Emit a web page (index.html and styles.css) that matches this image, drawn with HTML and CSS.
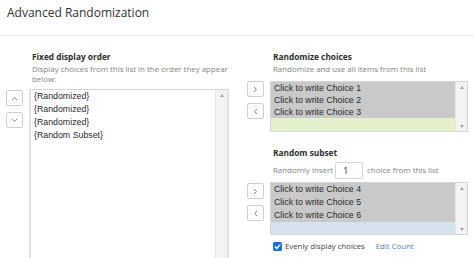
FILE: index.html
```html
<!DOCTYPE html>
<html>
<head>
<meta charset="utf-8">
<link rel="stylesheet" href="styles.css">
</head>
<body>
<div class="header"><h1 class="title">Advanced Randomization</h1></div>
<div class="main">
  <section class="section left">
    <div class="spacer"></div>
    <div class="labels">
      <div class="heading">Fixed display order</div>
      <div class="desc nowrap">Display choices from this list in the order they appear<br>below:</div>
    </div>
    <div class="btns btns-left">
      <button class="btn"><svg width="7" height="5" viewBox="0 0 7 5"><path d="M1 4 L3.5 1.5 L6 4" fill="none" stroke="#888" stroke-width="1"/></svg></button>
      <button class="btn"><svg width="7" height="5" viewBox="0 0 7 5"><path d="M1 1 L3.5 3.5 L6 1" fill="none" stroke="#888" stroke-width="1"/></svg></button>
    </div>
    <div class="list list-fixed">
      <div class="items">
        <div class="item">{Randomized}</div>
        <div class="item">{Randomized}</div>
        <div class="item">{Randomized}</div>
        <div class="item">{Random Subset}</div>
      </div>
      <div class="scroll"><span class="arr up"></span></div>
    </div>
  </section>

  <div class="right">
    <section class="section">
      <div class="spacer"></div>
      <div class="labels">
        <div class="heading">Randomize choices</div>
        <div class="desc">Randomize and use all items from this list</div>
      </div>
      <div class="btns btns-r1">
        <button class="btn"><svg width="5" height="7" viewBox="0 0 5 7"><path d="M1 1 L3.5 3.5 L1 6" fill="none" stroke="#888" stroke-width="1"/></svg></button>
        <button class="btn"><svg width="5" height="7" viewBox="0 0 5 7"><path d="M4 1 L1.5 3.5 L4 6" fill="none" stroke="#888" stroke-width="1"/></svg></button>
      </div>
      <div class="list list-choices">
        <div class="items">
          <div class="item sel">Click to write Choice 1</div>
          <div class="item sel">Click to write Choice 2</div>
          <div class="item sel">Click to write Choice 3</div>
          <div class="item drop green"></div>
        </div>
        <div class="scroll"><span class="arr up"></span><span class="arr down"></span></div>
      </div>
    </section>

    <section class="section subset">
      <div class="spacer"></div>
      <div class="labels">
        <div class="heading">Random subset</div>
        <div class="desc insert">Randomly insert <span class="num">1</span> choice from this list</div>
      </div>
      <div class="btns btns-r2">
        <button class="btn"><svg width="5" height="7" viewBox="0 0 5 7"><path d="M1 1 L3.5 3.5 L1 6" fill="none" stroke="#888" stroke-width="1"/></svg></button>
        <button class="btn"><svg width="5" height="7" viewBox="0 0 5 7"><path d="M4 1 L1.5 3.5 L4 6" fill="none" stroke="#888" stroke-width="1"/></svg></button>
      </div>
      <div class="list list-subset">
        <div class="items">
          <div class="item sel sub">Click to write Choice 4</div>
          <div class="item sel sub">Click to write Choice 5</div>
          <div class="item sel sub">Click to write Choice 6</div>
          <div class="item drop blue"></div>
        </div>
        <div class="scroll"><span class="arr up"></span><span class="arr down"></span></div>
      </div>
      <div class="spacer"></div>
      <div class="options">
        <span class="check"><svg width="9" height="9" viewBox="0 0 9 9"><rect x="0" y="0" width="9" height="9" rx="1.5" fill="#1a73e8"/><path d="M2 4.6 L3.8 6.4 L7.2 2.6" fill="none" stroke="#fff" stroke-width="1.4"/></svg></span>
        <span class="opt-label">Evenly display choices</span>
        <span class="link">Edit Count</span>
      </div>
    </section>
  </div>
</div>
</body>
</html>
```
FILE: styles.css
```css
* { box-sizing: border-box; }
html, body { margin: 0; padding: 0; background: #fff; }
body {
  width: 474px;
  height: 258px;
  overflow: hidden;
  font-family: "Open Sans", sans-serif;
  color: #333;
}
.header {
  height: 36px;
  border-bottom: 1px solid #eeeeee;
  padding: 3px 0 0 7px;
}
.title {
  margin: 0;
  font-size: 12px;
  font-weight: 400;
  line-height: 19px;
  color: #333;
}
.main {
  display: flex;
  padding-top: 14px;
}
.section {
  display: grid;
  grid-template-columns: 17px 1fr;
  column-gap: 6px;
  align-items: start;
}
.left {
  margin-left: 6px;
  width: 223px;
}
.right {
  margin-left: 18px;
  width: 221px;
  display: flex;
  flex-direction: column;
}
.heading {
  font-size: 8.3px;
  font-weight: 700;
  line-height: 13px;
  color: #2e2e2e;
  padding-left: 3px;
}
.desc {
  font-size: 7.9px;
  line-height: 10px;
  color: #858585;
  padding-left: 3px;
  margin-top: 1px;
}
.nowrap { white-space: nowrap; }
.btns {
  display: flex;
  flex-direction: column;
  gap: 6px;
}
.btns-left { margin-top: 6px; }
.btns-r1 { margin-top: 7px; }
.btns-r2 { margin-top: 4px; }
.btn {
  width: 17px;
  height: 16px;
  padding: 0;
  margin: 0;
  border: 1px solid #cfcfcf;
  border-radius: 2px;
  background: #fff;
  display: flex;
  align-items: center;
  justify-content: center;
}
.list {
  display: flex;
  border: 1px solid #d6d6d6;
  background: #fff;
  font-family: "Liberation Sans", Arial, sans-serif;
  font-size: 8.8px;
  color: #2a2a2a;
}
.items { flex: 1; }
.item {
  padding-left: 3px;
  line-height: 13px;
  height: 13px;
}
.list-fixed {
  margin-top: 5px;
  height: 180px;
  border-left: 2px solid #e2e2e2;
  border-right: 2px solid #e2e2e2;
}
.list-choices { margin-top: 7px; }
.sel { background: #c9c9c9; height: 12px; line-height: 12px; }
.sub { height: 13px; line-height: 13px; }
.drop { height: 13px; }
.green { background: #e3f0cb; }
.blue { background: #d6e3ef; height: 12px; }
.scroll {
  width: 12px;
  background: #f3f3f3;
  border-left: 1px solid #e6e6e6;
  display: flex;
  flex-direction: column;
  justify-content: space-between;
  align-items: center;
  padding: 4px 0 3px;
}
.arr {
  width: 0;
  height: 0;
  border-left: 2.5px solid transparent;
  border-right: 2.5px solid transparent;
}
.arr.up { border-bottom: 3px solid #a0a0a0; }
.arr.down { border-top: 3px solid #a0a0a0; }
.list-fixed .scroll { justify-content: flex-start; }
.subset { margin-top: 14px; }
.insert {
  display: flex;
  align-items: center;
  margin-top: 2px;
  height: 18px;
  white-space: nowrap;
}
.num {
  display: inline-block;
  width: 28px;
  height: 17px;
  border: 1px solid #d4d4d4;
  border-radius: 2px;
  margin: 0 4px 0 2px;
  padding-left: 7px;
  line-height: 15px;
  font-size: 9.5px;
  color: #333;
}
.list-subset { margin-top: 3px; }
.options {
  display: flex;
  align-items: center;
  height: 22px;
  padding-left: 3px;
  font-size: 7.8px;
  color: #444;
}
.check { display: flex; margin-right: 3px; }
.link { color: #4a7fbf; margin-left: 11px; }
```
